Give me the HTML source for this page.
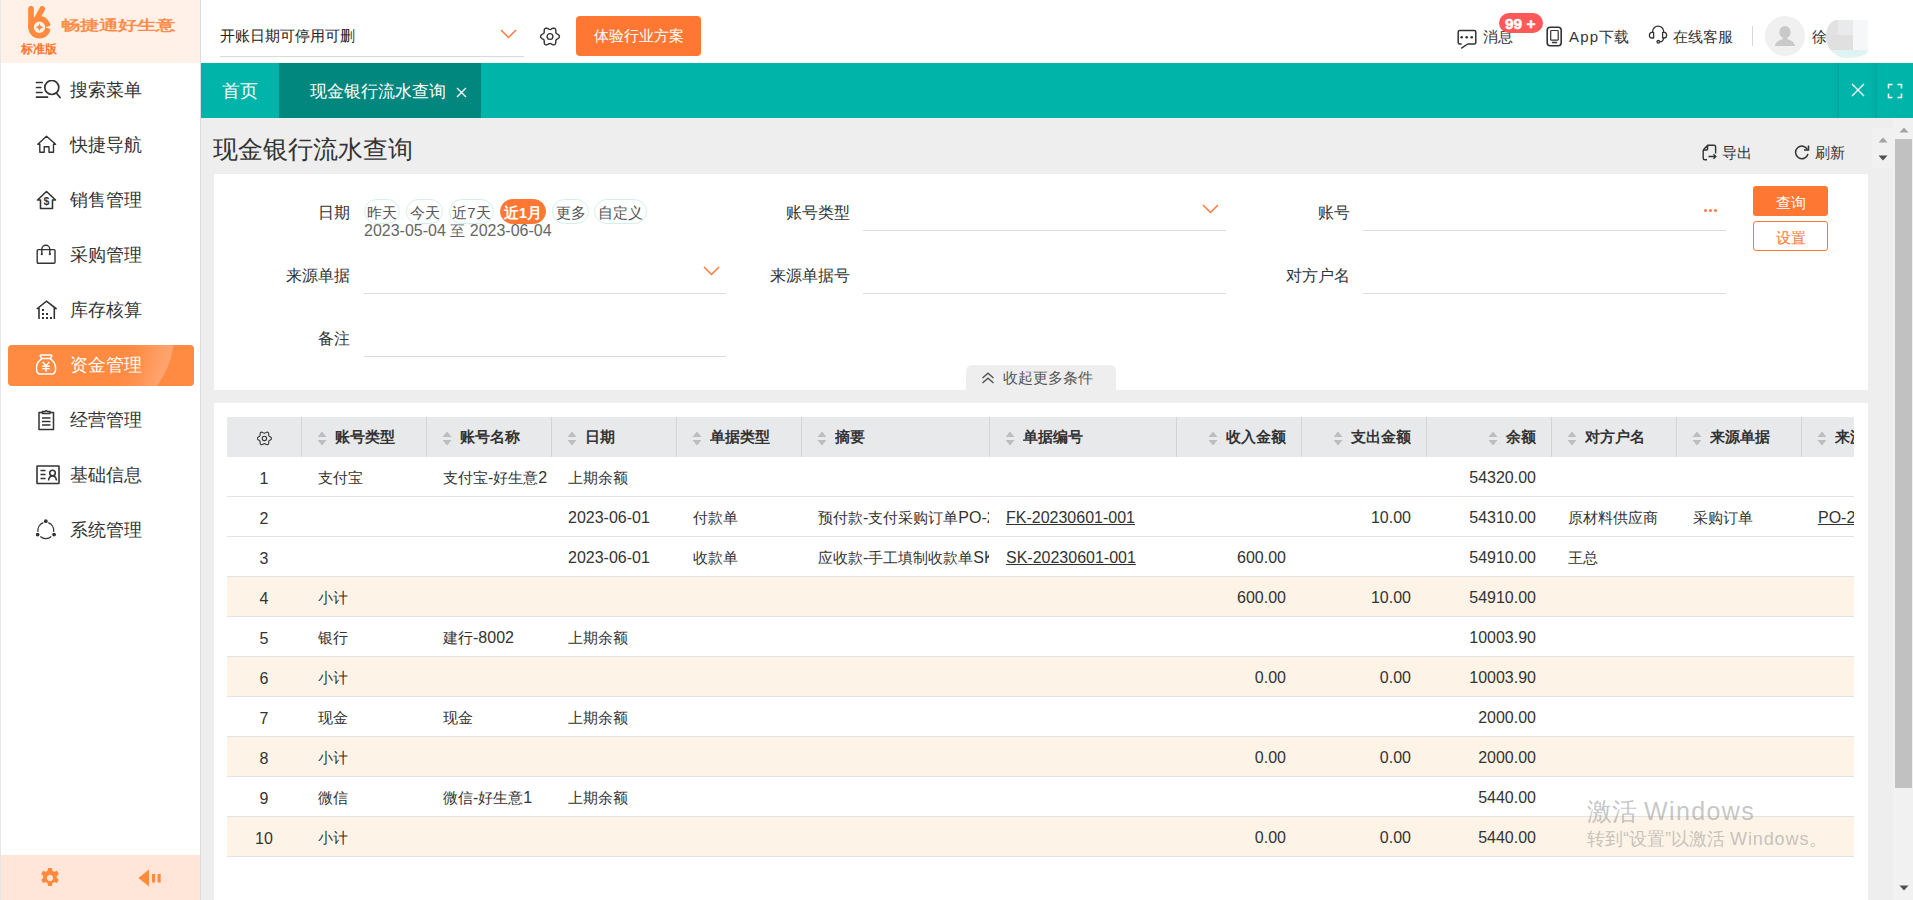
<!DOCTYPE html>
<html><head><meta charset="utf-8">
<style>
*{box-sizing:border-box;margin:0;padding:0}
html,body{width:1913px;height:900px;overflow:hidden;background:#eeeeee;font-family:"Liberation Sans",sans-serif;color:#333}
.abs{position:absolute}
#side{position:absolute;left:0;top:0;width:201px;height:900px;background:#fff;border-left:1px solid #e6e6e6;border-right:1px solid #dcdcdc}
#logo{position:absolute;left:0;top:0;width:199px;height:63px;background:#fff0e8}
.mi{position:absolute;left:7px;width:186px;height:41px;border-radius:4px;font-size:18px;color:#333;line-height:41px}
.mi .t{position:absolute;left:62px;top:0}
.mi svg{position:absolute;left:28px;top:10px}
.mi.on{background:linear-gradient(90deg,#ff8a42 0%,#ff8a42 58%,rgba(255,138,66,0) 80%),radial-gradient(circle 89px at 78px -12px,#ff8a42 0%,#ff8a42 45%,#ffa470 98.5%,#ff8a42 100%);color:#fff}
#sbot{position:absolute;left:0;top:855px;width:199px;height:45px;background:#ffe6d9}
#hdr{position:absolute;left:201px;top:0;width:1712px;height:63px;background:#fff}
#tabs{position:absolute;left:201px;top:63px;width:1712px;height:55px;background:#00b4a9}
.panel{position:absolute;background:#fff}
.lbl{position:absolute;font-size:16px;color:#333;text-align:right;width:141px;line-height:20px}
.inp{position:absolute;height:1px;background:#dcdcdc}
.chev{position:absolute}
.pill{position:absolute;top:199px;height:25px;border:1px solid #d3f0ed;border-radius:13px;font-size:15px;line-height:25px;color:#555;text-align:center}
.th{font-size:15px;font-weight:bold;color:#333;line-height:40px;white-space:nowrap;overflow:hidden}
.td{font-size:15px;color:#333;line-height:40px;white-space:nowrap;overflow:hidden}
.ul{text-decoration:underline}
.n{font-size:16px}
</style></head><body>
<div id="side">
  <div id="logo">
    <svg class="abs" style="left:26px;top:6px" width="25" height="33" viewBox="0 0 25 33">
      <path d="M4 2.7 V21" stroke="#ff8a3d" stroke-width="5.6" stroke-linecap="round" fill="none"/>
      <path d="M15.3 2.8 L10.2 12" stroke="#ff8a3d" stroke-width="5.5" stroke-linecap="round" fill="none"/>
      <circle cx="12.45" cy="21.3" r="8.45" stroke="#ff8a3d" stroke-width="5.5" fill="none"/>
      <path d="M18.4 21.3 L24.5 19.2 V23.4 Z" fill="#fff0e8"/>
      <path d="M12.5 17.1 Q13 20.8 16.7 21.3 Q13 21.8 12.5 25.5 Q12 21.8 8.3 21.3 Q12 20.8 12.5 17.1Z" fill="#ff8a3d"/>
    </svg>
    <div class="abs" style="left:60px;top:14px;font-size:19px;font-weight:bold;color:#ff8c48;white-space:nowrap;transform:scaleY(0.72);transform-origin:0 50%;line-height:24px">畅捷通好生意</div>
    <div class="abs" style="left:20px;top:41px;font-size:12px;font-weight:bold;color:#ff7433;white-space:nowrap">标准版</div>
  </div>
  <div class="mi" style="top:70px"><svg width="26" height="20" viewBox="0 0 26 20" style="left:27px;top:10px"><g stroke="#333" stroke-width="1.7" fill="none" stroke-linecap="round"><path d="M1.5 2.5h5.7M1.5 7.5h4.3M1.5 12.5h5.5M1.5 17.2h11"/><circle cx="16.8" cy="7.5" r="7"/><path d="M21.5 13.2l3.6 4.3"/></g></svg><span class="t">搜索菜单</span></div>
<div class="mi" style="top:125px"><svg width="22" height="20" viewBox="0 0 22 20" style="left:28px;top:10px"><path d="M1.8 9.3 L10.5 1.3 L19.6 9.3 H17.5 V17.3 H13 V11.8 H8.2 V17.3 H3.8 V9.3 Z" stroke="#333" stroke-width="1.4" fill="none" stroke-linejoin="round"/></svg><span class="t">快捷导航</span></div>
<div class="mi" style="top:180px"><svg width="22" height="21" viewBox="0 0 22 21" style="left:28px;top:10px"><path d="M1.5 10 L10.5 1.5 L19.5 10 H16.5 V18.5 H4.5 V10 Z" stroke="#333" stroke-width="1.6" fill="none" stroke-linejoin="round"/><text x="10.5" y="15" font-size="10.5" font-weight="bold" text-anchor="middle" fill="#333" font-family="Liberation Sans">$</text></svg><span class="t">销售管理</span></div>
<div class="mi" style="top:235px"><svg width="21" height="21" viewBox="0 0 21 21" style="left:28px;top:9px"><g stroke="#333" stroke-width="1.4" fill="none"><rect x="1.2" y="5.6" width="17.8" height="13.6" rx="1"/><path d="M5.8 10V5.2a4 4 0 0 1 8 0V10"/></g><circle cx="5.8" cy="10.2" r="1.1" fill="#333"/><circle cx="13.8" cy="10.2" r="1.1" fill="#333"/></svg><span class="t">采购管理</span></div>
<div class="mi" style="top:290px"><svg width="22" height="20" viewBox="0 0 22 20" style="left:28px;top:10px"><g stroke="#333" stroke-width="1.6" fill="none"><path d="M0.8 9 L10.5 1.2 L20.6 9 M3 7.5 V19 M18.3 7.5 V19"/></g><g fill="#333"><rect x="6" y="9" width="2" height="2"/><rect x="6" y="13" width="2" height="2"/><rect x="10" y="13" width="2" height="2"/><rect x="6" y="17" width="2" height="2"/><rect x="10" y="17" width="2" height="2"/><rect x="14" y="17" width="2" height="2"/></g></svg><span class="t">库存核算</span></div>
<div class="mi on" style="top:345px"><svg width="21" height="22" viewBox="0 0 21 22" style="left:28px;top:9px"><g stroke="#fff" stroke-width="1.5" fill="none" stroke-linejoin="round"><path d="M5.2 0.9 H14.8 Q16.3 0.9 15.6 2.3 L14.3 4.6 H5.7 L4.4 2.3 Q3.7 0.9 5.2 0.9Z"/><path d="M5.7 4.8 C1.3 7.5 -0.1 12 0.6 16.3 Q1.1 20.1 4.6 20.1 H15.4 Q18.9 20.1 19.4 16.3 C20.1 12 18.7 7.5 14.3 4.8"/></g><g stroke="#fff" stroke-width="1.4" fill="none"><path d="M6.8 8 L10 12 L13.2 8 M10 12 V17.8 M6.2 12.2 H13.8 M6.2 14.6 H13.8"/></g></svg><span class="t">资金管理</span></div>
<div class="mi" style="top:400px"><svg width="20" height="21" viewBox="0 0 20 21" style="left:29px;top:10px"><g stroke="#333" stroke-width="1.5" fill="none" stroke-linejoin="round"><path d="M5 2.5 H2 V19.5 H16.5 V2.5 H13.5 M5.5 3.5 V1.5 H8 Q9.2 0.2 10.5 1.5 H13 V3.5 Z"/><path d="M5 8h8.5M5 11.5h8.5M5 15h8.5"/></g></svg><span class="t">经营管理</span></div>
<div class="mi" style="top:455px"><svg width="24" height="20" viewBox="0 0 24 20" style="left:28px;top:10px"><g stroke="#333" stroke-width="1.6" fill="none"><rect x="1" y="1" width="22" height="17.5" rx="0.5"/><path d="M4.5 5.5h5M4.5 9.5h5M4.5 13.5h5"/><circle cx="16.5" cy="8" r="2.8"/><path d="M12.5 15.5 Q13 11 16.5 11 Q20 11 20.5 15.5"/></g></svg><span class="t">基础信息</span></div>
<div class="mi" style="top:510px"><svg width="22" height="21" viewBox="0 0 22 21" style="left:28px;top:9px"><g stroke="#333" stroke-width="1.3" fill="none"><path d="M7.3 3.6 A8.5 8.5 0 0 0 2 12.8 M12.3 3.6 A8.5 8.5 0 0 1 17.6 12.8 M4.3 17.6 A8.5 8.5 0 0 0 15.3 17.6"/></g><g fill="#333"><circle cx="9.8" cy="2.2" r="1.9"/><circle cx="1.6" cy="15.6" r="1.9"/><circle cx="18.1" cy="15.6" r="1.9"/></g></svg><span class="t">系统管理</span></div>

  <div id="sbot">
    <svg class="abs" style="left:39px;top:13px" width="20" height="20" viewBox="0.5 0.5 17 17">
      <path fill="#ff8a3d" fill-rule="evenodd" d="M7.4 0.5h3.2l0.5 2.3 1.6 0.9 2.2-0.8 1.6 2.8-1.7 1.5v1.8l1.7 1.5-1.6 2.8-2.2-0.8-1.6 0.9-0.5 2.3H7.4l-0.5-2.3-1.6-0.9-2.2 0.8-1.6-2.8 1.7-1.5V7.2L1.5 5.7l1.6-2.8 2.2 0.8 1.6-0.9z M9 6.3a2.7 2.7 0 1 0 0.001 0z"/>
    </svg>
    <svg class="abs" style="left:137px;top:14px" width="24" height="18" viewBox="0 0 24 18"><path d="M0.5 9 L11 0.5 V17.5 Z" fill="#ff8a3d"/><rect x="14" y="5" width="3.2" height="8.5" fill="#ff8a3d"/><rect x="19.5" y="5" width="3.2" height="8.5" fill="#ff8a3d"/></svg>
  </div>
</div>
<div id="hdr">
  <div class="abs" style="left:19px;top:27px;font-size:15px;color:#222;white-space:nowrap">开账日期可停用可删</div>
  <div class="abs" style="left:19px;top:56px;width:304px;height:1px;background:#d9d9d9"></div>
  <svg class="abs" style="left:299px;top:29px" width="17" height="10" viewBox="0 0 17 10"><path d="M1 1 L8.5 8.5 L16 1" stroke="#ff7a3a" stroke-width="1.5" fill="none"/></svg>
  <svg class="abs" style="left:338px;top:26px" width="22" height="21" viewBox="0 0 22 21"><path fill="none" stroke="#333" stroke-width="1.4" stroke-linejoin="round" d="M20.45 10.50 L20.25 11.31 L19.69 12.03 L18.92 12.62 L18.12 13.09 L17.45 13.51 L17.02 13.97 L16.83 14.58 L16.80 15.37 L16.80 16.30 L16.67 17.26 L16.32 18.10 L15.73 18.68 L14.92 18.91 L14.02 18.79 L13.12 18.42 L12.32 17.96 L11.62 17.59 L11.00 17.45 L10.38 17.59 L9.68 17.96 L8.88 18.42 L7.98 18.79 L7.08 18.91 L6.28 18.68 L5.68 18.10 L5.33 17.26 L5.20 16.30 L5.20 15.37 L5.17 14.58 L4.98 13.98 L4.55 13.51 L3.88 13.09 L3.08 12.62 L2.31 12.03 L1.75 11.31 L1.55 10.50 L1.75 9.69 L2.31 8.97 L3.08 8.38 L3.88 7.91 L4.55 7.49 L4.98 7.02 L5.17 6.42 L5.20 5.63 L5.20 4.70 L5.33 3.74 L5.68 2.90 L6.27 2.32 L7.08 2.09 L7.98 2.21 L8.88 2.58 L9.68 3.04 L10.38 3.41 L11.00 3.55 L11.62 3.41 L12.32 3.04 L13.12 2.58 L14.02 2.21 L14.92 2.09 L15.72 2.32 L16.32 2.90 L16.67 3.74 L16.80 4.70 L16.80 5.63 L16.83 6.42 L17.02 7.03 L17.45 7.49 L18.12 7.91 L18.92 8.38 L19.69 8.97 L20.25 9.69Z"/><circle cx="11" cy="10.5" r="2.9" fill="none" stroke="#333" stroke-width="1.4"/></svg>
  <div class="abs" style="left:375px;top:16px;width:125px;height:40px;border-radius:4px;background:#ff7833;color:#fff;font-size:15px;line-height:40px;text-align:center">体验行业方案</div>

  <svg class="abs" style="left:1255px;top:29px" width="22" height="21" viewBox="0 0 22 21"><path d="M5.7 15 H3.7 Q2.2 15 2.2 13.5 V3 Q2.2 1.5 3.7 1.5 H18.3 Q19.8 1.5 19.8 3 V13.5 Q19.8 15 18.3 15 H11.7 L5.2 19.4" fill="none" stroke="#333" stroke-width="1.5" stroke-linejoin="round"/><circle cx="5.7" cy="8.3" r="1.3" fill="#333"/><circle cx="10.7" cy="8.3" r="1.3" fill="#333"/><circle cx="15.7" cy="8.3" r="1.3" fill="#333"/></svg>
  <div class="abs" style="left:1282px;top:28px;font-size:15px;color:#333;white-space:nowrap">消息</div>
  <div class="abs" style="left:1298px;top:13px;width:44px;height:20px;border-radius:10px;background:#ff5858;color:#fff;font-size:15.5px;font-weight:bold;line-height:21px;padding-left:6px;white-space:nowrap;-webkit-text-stroke:0.5px #fff">99 +</div>
  <svg class="abs" style="left:1345px;top:26px" width="17" height="21" viewBox="0 0 17 21"><rect x="1.2" y="1.2" width="14" height="18.5" rx="3" fill="none" stroke="#333" stroke-width="1.6"/><rect x="4.7" y="4.5" width="7.5" height="9.7" rx="0.8" fill="none" stroke="#333" stroke-width="1.2"/><path d="M6.4 16.5 H10.6" stroke="#333" stroke-width="1.3" stroke-linecap="round"/></svg>
  <div class="abs" style="left:1368px;top:28px;font-size:15px;color:#333;white-space:nowrap"><span style="letter-spacing:1.2px">App</span>下载</div>
  <svg class="abs" style="left:1447px;top:25px" width="20" height="20" viewBox="0 0 20 20"><g fill="none" stroke="#333" stroke-width="1.3" stroke-linejoin="round"><path d="M4.6 7.5 V6.6 A5.55 5.55 0 0 1 15.7 6.6 V7.5"/><path d="M5.6 7.3 V13 H4 Q1.4 13 1.4 10.15 Q1.4 7.3 4 7.3 Z"/><path d="M14.6 7.3 V13 H16.2 Q18.6 13 18.6 10.15 Q18.6 7.3 16.2 7.3 Z"/><path d="M15.6 13 Q15.4 16.8 11.6 16.8"/><circle cx="10.3" cy="16.8" r="1.3"/></g></svg>
  <div class="abs" style="left:1472px;top:28px;font-size:15px;color:#333;white-space:nowrap">在线客服</div>
  <div class="abs" style="left:1551px;top:26px;width:1px;height:20px;background:#d8d8d8"></div>
  <div class="abs" style="left:1564px;top:16px;width:40px;height:40px;border-radius:20px;background:#f0f0f0;overflow:hidden">
    <svg class="abs" style="left:9px;top:9px" width="22" height="22" viewBox="0 0 22 22"><ellipse cx="11" cy="7.2" rx="5.6" ry="6.2" fill="#c9c9c9"/><path d="M1 21 Q1.5 16.5 6.5 15 Q8.5 14.4 9 13 H13 Q13.5 14.4 15.5 15 Q20.5 16.5 21 21 Z" fill="#c9c9c9"/></svg>
  </div>
  <div class="abs" style="left:1611px;top:28px;font-size:15px;color:#333;white-space:nowrap">徐</div>
  <div class="abs" style="left:1625px;top:20px;width:42px;height:37.5px;border-radius:11px 0 21px 21px / 16.4px 0 7.5px 21px;overflow:hidden">
    <div class="abs" style="left:0;top:0;width:12px;height:15px;background:#e2e2e2"></div>
    <div class="abs" style="left:12px;top:0;width:15px;height:15px;background:#e9eaec"></div>
    <div class="abs" style="left:0;top:15px;width:27px;height:15px;background:#e0e0e0"></div>
    <div class="abs" style="left:27px;top:0;width:15px;height:30px;background:#f6f7f8"></div>
    <div class="abs" style="left:0;top:30px;width:42px;height:8px;background:#dff3f2"></div>
  </div>
</div>
<div id="tabs">
  <div class="abs" style="left:0;top:1px;width:78px;height:55px;color:#fff;font-size:18px;line-height:55px;text-align:center">首页</div>
  <div class="abs" style="left:78px;top:0;width:202px;height:55px;background:#01877e;color:#fff;font-size:18px;line-height:55px">
    <span class="abs" style="left:31px;top:1px;font-size:17.3px">现金银行流水查询</span>
    <svg class="abs" style="left:177px;top:24px" width="11" height="11" viewBox="0 0 11 11"><path d="M1 1L10 10M10 1L1 10" stroke="#fff" stroke-width="1.4"/></svg>
  </div>
  <div class="abs" style="left:1630px;top:0;width:8px;height:55px;background:linear-gradient(90deg,rgba(0,0,0,0),rgba(0,0,0,0.045))"></div>
  <div class="abs" style="left:1637px;top:0;width:1px;height:55px;background:rgba(0,0,0,0.04)"></div>
  <svg class="abs" style="left:1650px;top:20px" width="14" height="14" viewBox="0 0 14 14"><path d="M1 1L13 13M13 1L1 13" stroke="#fff" stroke-width="1.3"/></svg>
  <div class="abs" style="left:1668px;top:0;width:8px;height:55px;background:linear-gradient(90deg,rgba(0,0,0,0),rgba(0,0,0,0.045))"></div>
  <div class="abs" style="left:1675px;top:0;width:1px;height:55px;background:rgba(0,0,0,0.04)"></div>
  <svg class="abs" style="left:1686px;top:20px" width="16" height="16" viewBox="0 0 16 16"><path d="M1.5 5.5V1.5H5.5M10.5 1.5H14.5V5.5M14.5 10.5V14.5H10.5M5.5 14.5H1.5V10.5" stroke="#fff" stroke-width="1.5" fill="none"/></svg>
</div>
<div id="content">
  <div class="abs" style="left:213px;top:133px;font-size:25px;color:#333;white-space:nowrap">现金银行流水查询</div>
  <svg class="abs" style="left:1702px;top:144px" width="16" height="17" viewBox="0 0 16 17"><path d="M1.2 6 V14.3 Q1.2 15.8 2.7 15.8 H5 M1.2 6 L5.6 1.2 H12 Q13.6 1.2 13.6 2.8 V9.5 M5.6 1.2 V5 Q5.6 6 4.6 6 H1.2" fill="none" stroke="#333" stroke-width="1.4" stroke-linejoin="round"/><path d="M6.5 12.5 H13.8 M11.5 10.2 L13.8 12.5 L11.5 14.8" fill="none" stroke="#333" stroke-width="1.4"/></svg>
  <div class="abs" style="left:1722px;top:144px;font-size:15px;color:#333;white-space:nowrap">导出</div>
  <svg class="abs" style="left:1794px;top:144px" width="16" height="16" viewBox="0 0 16 16"><path d="M13.5 5.5 A6.3 6.3 0 1 0 14 10" fill="none" stroke="#333" stroke-width="1.5"/><path d="M14.5 1.5 V6 H10" fill="none" stroke="#333" stroke-width="1.5"/></svg>
  <div class="abs" style="left:1815px;top:144px;font-size:15px;color:#333;white-space:nowrap">刷新</div>

  <div class="panel" style="left:214px;top:174px;width:1654px;height:216px">
    <div class="lbl" style="left:-5px;top:29px">日期</div>
    <div class="lbl" style="left:495px;top:29px">账号类型</div>
    <div class="lbl" style="left:995px;top:29px">账号</div>
    <div class="lbl" style="left:-5px;top:92px">来源单据</div>
    <div class="lbl" style="left:495px;top:92px">来源单据号</div>
    <div class="lbl" style="left:995px;top:92px">对方户名</div>
    <div class="lbl" style="left:-5px;top:155px">备注</div>
    <div class="inp" style="left:649px;top:56px;width:363px"></div>
    <div class="inp" style="left:1149px;top:56px;width:363px"></div>
    <div class="inp" style="left:150px;top:119px;width:362px"></div>
    <div class="inp" style="left:649px;top:119px;width:363px"></div>
    <div class="inp" style="left:1149px;top:119px;width:363px"></div>
    <div class="inp" style="left:150px;top:182px;width:362px"></div>
    <svg class="abs" style="left:988px;top:30px" width="17" height="10" viewBox="0 0 17 10"><path d="M1 1 L8.5 8.5 L16 1" stroke="#ff7a3a" stroke-width="1.5" fill="none"/></svg>
    <svg class="abs" style="left:489px;top:92px" width="17" height="10" viewBox="0 0 17 10"><path d="M1 1 L8.5 8.5 L16 1" stroke="#ff7a3a" stroke-width="1.5" fill="none"/></svg>
    <div class="abs" style="left:1490px;top:35px;width:3px;height:3px;border-radius:2px;background:#ff7a3a;box-shadow:5px 0 0 #ff7a3a,10px 0 0 #ff7a3a"></div>
    <div class="abs" style="left:1539px;top:12px;width:75px;height:30px;border-radius:3px;background:#ff7833;color:#fff;font-size:15px;line-height:34px;text-align:center">查询</div>
    <div class="abs" style="left:1539px;top:47px;width:75px;height:30px;border-radius:3px;border:1px solid #ff7833;color:#ff7833;font-size:15px;line-height:32px;text-align:center">设置</div>
    <div class="abs" style="left:752px;top:191px;width:150px;height:25px;border-radius:6px 6px 0 0;background:#eeeeee;color:#555;font-size:15px;line-height:25px;white-space:nowrap">
      <svg class="abs" style="left:15px;top:7px" width="14" height="12" viewBox="0 0 14 12"><path d="M1.5 6 L7 1.2 L12.5 6 M1.5 11 L7 6.2 L12.5 11" fill="none" stroke="#555" stroke-width="1.5"/></svg>
      <span class="abs" style="left:37px;top:0">收起更多条件</span>
    </div>
    <div class="pill" style="left:150px;top:25px;width:36px">昨天</div><div class="pill" style="left:192px;top:25px;width:37px">今天</div><div class="pill" style="left:235px;top:25px;width:45px">近7天</div><div class="pill" style="left:286px;top:25px;width:46px;background:#ff7833;border-color:#ff7833;color:#fff;font-weight:bold">近1月</div><div class="pill" style="left:338px;top:25px;width:37px">更多</div><div class="pill" style="left:380px;top:25px;width:53px">自定义</div><div class="abs" style="left:150px;top:47px;font-size:16px;color:#666;white-space:nowrap;line-height:20px">2023-05-04 <span style="font-size:15px">至</span> 2023-06-04</div>
  </div>

<!--TABLE-->
<div class="panel" style="left:214px;top:403px;width:1654px;height:497px;overflow:hidden">
<div class="abs" style="left:13px;top:14px;width:1627px;height:480px;overflow:hidden">
<div class="abs" style="left:0;top:0;width:1700px;height:40px;background:#e8e9eb"></div>
<div class="abs" style="left:30px;top:14px"><svg width="16" height="16" viewBox="0.6 0.6 16 16"><path fill="none" stroke="#333" stroke-width="1.1" stroke-linejoin="round" d="M15.05 8.00 L14.90 8.60 L14.48 9.14 L13.89 9.58 L13.29 9.92 L12.78 10.23 L12.46 10.57 L12.32 11.03 L12.31 11.62 L12.31 12.31 L12.23 13.04 L11.97 13.67 L11.53 14.11 L10.93 14.27 L10.25 14.18 L9.58 13.89 L8.98 13.54 L8.46 13.26 L8.00 13.15 L7.54 13.26 L7.02 13.54 L6.42 13.89 L5.75 14.18 L5.07 14.27 L4.48 14.11 L4.03 13.67 L3.77 13.04 L3.69 12.31 L3.69 11.62 L3.68 11.03 L3.54 10.58 L3.22 10.23 L2.71 9.92 L2.11 9.58 L1.52 9.14 L1.10 8.60 L0.95 8.00 L1.10 7.40 L1.52 6.86 L2.11 6.42 L2.71 6.08 L3.22 5.77 L3.54 5.42 L3.68 4.97 L3.69 4.38 L3.69 3.69 L3.77 2.96 L4.03 2.33 L4.47 1.89 L5.07 1.73 L5.75 1.82 L6.42 2.11 L7.02 2.46 L7.54 2.74 L8.00 2.85 L8.46 2.74 L8.98 2.46 L9.58 2.11 L10.25 1.82 L10.93 1.73 L11.52 1.89 L11.97 2.33 L12.23 2.96 L12.31 3.69 L12.31 4.38 L12.32 4.97 L12.46 5.43 L12.78 5.77 L13.29 6.08 L13.89 6.42 L14.48 6.86 L14.90 7.40Z"/><circle cx="8" cy="8" r="2.2" fill="none" stroke="#333" stroke-width="1.1"/></svg></div>
<div class="abs" style="left:74px;top:0;width:1px;height:40px;background:#d3d4d6"></div>
<div class="abs" style="left:90px;top:14px;width:10px;height:15px"><svg width="10" height="15" viewBox="0 0 10 15"><path d="M5 0.5 L9.5 6 H0.5Z M5 14.5 L9.5 9 H0.5Z" fill="#bdbdbd"/></svg></div>
<div class="abs th" style="left:108px;top:0;width:91px">账号类型</div>
<div class="abs" style="left:199px;top:0;width:1px;height:40px;background:#d3d4d6"></div>
<div class="abs" style="left:215px;top:14px;width:10px;height:15px"><svg width="10" height="15" viewBox="0 0 10 15"><path d="M5 0.5 L9.5 6 H0.5Z M5 14.5 L9.5 9 H0.5Z" fill="#bdbdbd"/></svg></div>
<div class="abs th" style="left:233px;top:0;width:91px">账号名称</div>
<div class="abs" style="left:324px;top:0;width:1px;height:40px;background:#d3d4d6"></div>
<div class="abs" style="left:340px;top:14px;width:10px;height:15px"><svg width="10" height="15" viewBox="0 0 10 15"><path d="M5 0.5 L9.5 6 H0.5Z M5 14.5 L9.5 9 H0.5Z" fill="#bdbdbd"/></svg></div>
<div class="abs th" style="left:358px;top:0;width:91px">日期</div>
<div class="abs" style="left:449px;top:0;width:1px;height:40px;background:#d3d4d6"></div>
<div class="abs" style="left:465px;top:14px;width:10px;height:15px"><svg width="10" height="15" viewBox="0 0 10 15"><path d="M5 0.5 L9.5 6 H0.5Z M5 14.5 L9.5 9 H0.5Z" fill="#bdbdbd"/></svg></div>
<div class="abs th" style="left:483px;top:0;width:91px">单据类型</div>
<div class="abs" style="left:574px;top:0;width:1px;height:40px;background:#d3d4d6"></div>
<div class="abs" style="left:590px;top:14px;width:10px;height:15px"><svg width="10" height="15" viewBox="0 0 10 15"><path d="M5 0.5 L9.5 6 H0.5Z M5 14.5 L9.5 9 H0.5Z" fill="#bdbdbd"/></svg></div>
<div class="abs th" style="left:608px;top:0;width:154px">摘要</div>
<div class="abs" style="left:762px;top:0;width:1px;height:40px;background:#d3d4d6"></div>
<div class="abs" style="left:778px;top:14px;width:10px;height:15px"><svg width="10" height="15" viewBox="0 0 10 15"><path d="M5 0.5 L9.5 6 H0.5Z M5 14.5 L9.5 9 H0.5Z" fill="#bdbdbd"/></svg></div>
<div class="abs th" style="left:796px;top:0;width:153px">单据编号</div>
<div class="abs" style="left:949px;top:0;width:1px;height:40px;background:#d3d4d6"></div>
<div class="abs" style="left:981px;top:14px;width:10px;height:15px"><svg width="10" height="15" viewBox="0 0 10 15"><path d="M5 0.5 L9.5 6 H0.5Z M5 14.5 L9.5 9 H0.5Z" fill="#bdbdbd"/></svg></div>
<div class="abs th" style="left:949px;top:0;width:110px;text-align:right">收入金额</div>
<div class="abs" style="left:1074px;top:0;width:1px;height:40px;background:#d3d4d6"></div>
<div class="abs" style="left:1106px;top:14px;width:10px;height:15px"><svg width="10" height="15" viewBox="0 0 10 15"><path d="M5 0.5 L9.5 6 H0.5Z M5 14.5 L9.5 9 H0.5Z" fill="#bdbdbd"/></svg></div>
<div class="abs th" style="left:1074px;top:0;width:110px;text-align:right">支出金额</div>
<div class="abs" style="left:1199px;top:0;width:1px;height:40px;background:#d3d4d6"></div>
<div class="abs" style="left:1261px;top:14px;width:10px;height:15px"><svg width="10" height="15" viewBox="0 0 10 15"><path d="M5 0.5 L9.5 6 H0.5Z M5 14.5 L9.5 9 H0.5Z" fill="#bdbdbd"/></svg></div>
<div class="abs th" style="left:1199px;top:0;width:110px;text-align:right">余额</div>
<div class="abs" style="left:1324px;top:0;width:1px;height:40px;background:#d3d4d6"></div>
<div class="abs" style="left:1340px;top:14px;width:10px;height:15px"><svg width="10" height="15" viewBox="0 0 10 15"><path d="M5 0.5 L9.5 6 H0.5Z M5 14.5 L9.5 9 H0.5Z" fill="#bdbdbd"/></svg></div>
<div class="abs th" style="left:1358px;top:0;width:91px">对方户名</div>
<div class="abs" style="left:1449px;top:0;width:1px;height:40px;background:#d3d4d6"></div>
<div class="abs" style="left:1465px;top:14px;width:10px;height:15px"><svg width="10" height="15" viewBox="0 0 10 15"><path d="M5 0.5 L9.5 6 H0.5Z M5 14.5 L9.5 9 H0.5Z" fill="#bdbdbd"/></svg></div>
<div class="abs th" style="left:1483px;top:0;width:91px">来源单据</div>
<div class="abs" style="left:1574px;top:0;width:1px;height:40px;background:#d3d4d6"></div>
<div class="abs" style="left:1590px;top:14px;width:10px;height:15px"><svg width="10" height="15" viewBox="0 0 10 15"><path d="M5 0.5 L9.5 6 H0.5Z M5 14.5 L9.5 9 H0.5Z" fill="#bdbdbd"/></svg></div>
<div class="abs th" style="left:1608px;top:0;width:91px">来源单据号</div>
<div class="abs" style="left:0;top:40px;width:1700px;height:40px;background:#fff;border-bottom:1px solid #e3e3e3"></div>
<div class="abs td" style="left:0px;top:42px;width:74px;text-align:center"><span class="n">1</span></div>
<div class="abs td" style="left:91px;top:41px;width:108px">支付宝</div>
<div class="abs td" style="left:216px;top:41px;width:108px">支付宝<span class="n">-</span>好生意<span class="n">2</span></div>
<div class="abs td" style="left:341px;top:41px;width:108px">上期余额</div>
<div class="abs td" style="left:1199px;top:41px;width:110px;text-align:right"><span class="n">54320.00</span></div>
<div class="abs" style="left:0;top:80px;width:1700px;height:40px;background:#fff;border-bottom:1px solid #e3e3e3"></div>
<div class="abs td" style="left:0px;top:82px;width:74px;text-align:center"><span class="n">2</span></div>
<div class="abs td" style="left:341px;top:81px;width:108px"><span class="n">2023-06-01</span></div>
<div class="abs td" style="left:466px;top:81px;width:108px">付款单</div>
<div class="abs td" style="left:591px;top:81px;width:171px">预付款<span class="n">-</span>支付采购订单<span class="n">PO-20230601-001</span></div>
<div class="abs td ul" style="left:779px;top:81px;width:170px"><span class="n">FK-20230601-001</span></div>
<div class="abs td" style="left:1074px;top:81px;width:110px;text-align:right"><span class="n">10.00</span></div>
<div class="abs td" style="left:1199px;top:81px;width:110px;text-align:right"><span class="n">54310.00</span></div>
<div class="abs td" style="left:1341px;top:81px;width:108px">原材料供应商</div>
<div class="abs td" style="left:1466px;top:81px;width:108px">采购订单</div>
<div class="abs td ul" style="left:1591px;top:81px;width:108px"><span class="n">PO-20230601-001</span></div>
<div class="abs" style="left:0;top:120px;width:1700px;height:40px;background:#fff;border-bottom:1px solid #e3e3e3"></div>
<div class="abs td" style="left:0px;top:122px;width:74px;text-align:center"><span class="n">3</span></div>
<div class="abs td" style="left:341px;top:121px;width:108px"><span class="n">2023-06-01</span></div>
<div class="abs td" style="left:466px;top:121px;width:108px">收款单</div>
<div class="abs td" style="left:591px;top:121px;width:171px">应收款<span class="n">-</span>手工填制收款单<span class="n">SK-20230601-001</span></div>
<div class="abs td ul" style="left:779px;top:121px;width:170px"><span class="n">SK-20230601-001</span></div>
<div class="abs td" style="left:949px;top:121px;width:110px;text-align:right"><span class="n">600.00</span></div>
<div class="abs td" style="left:1199px;top:121px;width:110px;text-align:right"><span class="n">54910.00</span></div>
<div class="abs td" style="left:1341px;top:121px;width:108px">王总</div>
<div class="abs" style="left:0;top:160px;width:1700px;height:40px;background:#fdf3e6;border-bottom:1px solid #e3e3e3"></div>
<div class="abs td" style="left:0px;top:162px;width:74px;text-align:center"><span class="n">4</span></div>
<div class="abs td" style="left:91px;top:161px;width:108px">小计</div>
<div class="abs td" style="left:949px;top:161px;width:110px;text-align:right"><span class="n">600.00</span></div>
<div class="abs td" style="left:1074px;top:161px;width:110px;text-align:right"><span class="n">10.00</span></div>
<div class="abs td" style="left:1199px;top:161px;width:110px;text-align:right"><span class="n">54910.00</span></div>
<div class="abs" style="left:0;top:200px;width:1700px;height:40px;background:#fff;border-bottom:1px solid #e3e3e3"></div>
<div class="abs td" style="left:0px;top:202px;width:74px;text-align:center"><span class="n">5</span></div>
<div class="abs td" style="left:91px;top:201px;width:108px">银行</div>
<div class="abs td" style="left:216px;top:201px;width:108px">建行<span class="n">-8002</span></div>
<div class="abs td" style="left:341px;top:201px;width:108px">上期余额</div>
<div class="abs td" style="left:1199px;top:201px;width:110px;text-align:right"><span class="n">10003.90</span></div>
<div class="abs" style="left:0;top:240px;width:1700px;height:40px;background:#fdf3e6;border-bottom:1px solid #e3e3e3"></div>
<div class="abs td" style="left:0px;top:242px;width:74px;text-align:center"><span class="n">6</span></div>
<div class="abs td" style="left:91px;top:241px;width:108px">小计</div>
<div class="abs td" style="left:949px;top:241px;width:110px;text-align:right"><span class="n">0.00</span></div>
<div class="abs td" style="left:1074px;top:241px;width:110px;text-align:right"><span class="n">0.00</span></div>
<div class="abs td" style="left:1199px;top:241px;width:110px;text-align:right"><span class="n">10003.90</span></div>
<div class="abs" style="left:0;top:280px;width:1700px;height:40px;background:#fff;border-bottom:1px solid #e3e3e3"></div>
<div class="abs td" style="left:0px;top:282px;width:74px;text-align:center"><span class="n">7</span></div>
<div class="abs td" style="left:91px;top:281px;width:108px">现金</div>
<div class="abs td" style="left:216px;top:281px;width:108px">现金</div>
<div class="abs td" style="left:341px;top:281px;width:108px">上期余额</div>
<div class="abs td" style="left:1199px;top:281px;width:110px;text-align:right"><span class="n">2000.00</span></div>
<div class="abs" style="left:0;top:320px;width:1700px;height:40px;background:#fdf3e6;border-bottom:1px solid #e3e3e3"></div>
<div class="abs td" style="left:0px;top:322px;width:74px;text-align:center"><span class="n">8</span></div>
<div class="abs td" style="left:91px;top:321px;width:108px">小计</div>
<div class="abs td" style="left:949px;top:321px;width:110px;text-align:right"><span class="n">0.00</span></div>
<div class="abs td" style="left:1074px;top:321px;width:110px;text-align:right"><span class="n">0.00</span></div>
<div class="abs td" style="left:1199px;top:321px;width:110px;text-align:right"><span class="n">2000.00</span></div>
<div class="abs" style="left:0;top:360px;width:1700px;height:40px;background:#fff;border-bottom:1px solid #e3e3e3"></div>
<div class="abs td" style="left:0px;top:362px;width:74px;text-align:center"><span class="n">9</span></div>
<div class="abs td" style="left:91px;top:361px;width:108px">微信</div>
<div class="abs td" style="left:216px;top:361px;width:108px">微信<span class="n">-</span>好生意<span class="n">1</span></div>
<div class="abs td" style="left:341px;top:361px;width:108px">上期余额</div>
<div class="abs td" style="left:1199px;top:361px;width:110px;text-align:right"><span class="n">5440.00</span></div>
<div class="abs" style="left:0;top:400px;width:1700px;height:40px;background:#fdf3e6;border-bottom:1px solid #e3e3e3"></div>
<div class="abs td" style="left:0px;top:402px;width:74px;text-align:center"><span class="n">10</span></div>
<div class="abs td" style="left:91px;top:401px;width:108px">小计</div>
<div class="abs td" style="left:949px;top:401px;width:110px;text-align:right"><span class="n">0.00</span></div>
<div class="abs td" style="left:1074px;top:401px;width:110px;text-align:right"><span class="n">0.00</span></div>
<div class="abs td" style="left:1199px;top:401px;width:110px;text-align:right"><span class="n">5440.00</span></div>
</div></div>
<!--/TABLE-->
  <div class="abs" style="left:1872px;top:128px;width:21px;height:40px;background:#f1f1f1"></div>
  <svg class="abs" style="left:1878px;top:137px" width="10" height="6" viewBox="0 0 10 6"><path d="M5 0.5 L9.5 5.5 H0.5Z" fill="#a3a3a3"/></svg>
  <svg class="abs" style="left:1878px;top:155px" width="10" height="6" viewBox="0 0 10 6"><path d="M5 5.5 L9.5 0.5 H0.5Z" fill="#505050"/></svg>
  <div class="abs" style="left:1893px;top:118px;width:20px;height:782px;background:#f1f1f1"></div>
  <svg class="abs" style="left:1899px;top:127px" width="10" height="6" viewBox="0 0 10 6"><path d="M5 0.5 L9.5 5.5 H0.5Z" fill="#a3a3a3"/></svg>
  <div class="abs" style="left:1895px;top:139px;width:17px;height:649px;background:#c1c1c1"></div>
  <svg class="abs" style="left:1899px;top:885px" width="10" height="6" viewBox="0 0 10 6"><path d="M5 5.5 L9.5 0.5 H0.5Z" fill="#505050"/></svg>
</div>
<div class="abs" style="left:1587px;top:796px;font-size:25px;color:rgba(150,150,150,0.55);white-space:nowrap;line-height:30px">激活 <span style="letter-spacing:1.4px">Windows</span></div>
<div class="abs" style="left:1587px;top:828px;font-size:18px;color:rgba(150,150,150,0.55);white-space:nowrap;line-height:22px">转到“设置”以激活 <span style="letter-spacing:0.9px">Windows</span>。</div>
</body></html>
